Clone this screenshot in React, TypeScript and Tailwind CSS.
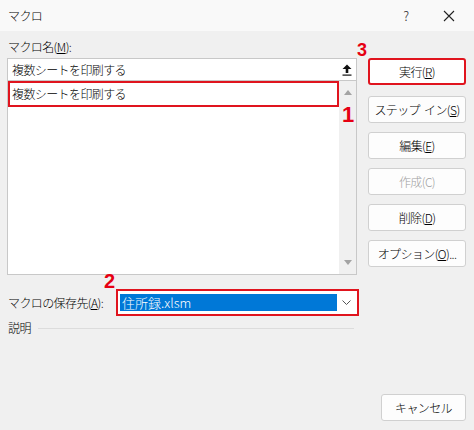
import React from "react";

const font = { fontFamily: '"Noto Sans CJK JP", "Noto Sans", sans-serif' };

function Btn({
  children,
  disabled,
  marked,
  className = "",
}: {
  children: React.ReactNode;
  disabled?: boolean;
  marked?: boolean;
  className?: string;
}) {
  return (
    <div
      className={`h-[27px] flex items-center justify-center rounded-[3px] text-[12px] ${
        marked ? "border-2 border-[#e0141e] bg-white" : "border border-[#d0d0d0] bg-[#fdfdfd]"
      } ${disabled ? "text-[#a0a0a0]" : "text-black"} ${className}`}
    >
      {children}
    </div>
  );
}

function Mark({ n, className }: { n: string; className: string }) {
  return (
    <div
      className={`absolute text-[#e60012] font-bold leading-none ${className}`}
      style={{ fontFamily: '"Liberation Sans", Arial, sans-serif' }}
    >
      {n}
    </div>
  );
}

export default function App() {
  return (
    <div
      className="w-[474px] h-[430px] bg-[#f0f0f0] flex flex-col relative overflow-hidden font-light tracking-[-0.6px] text-black"
      style={font}
    >
      {/* title bar */}
      <div className="h-[31px] bg-[#f9f9f9] flex items-center pl-[8px] text-[12px]">
        <span>マクロ</span>
        <span className="ml-auto w-[20px] text-center text-[13px] text-[#333]">?</span>
        <svg className="ml-[27px] mr-[19px]" width="12" height="12" viewBox="0 0 12 12">
          <path d="M1 1L11 11M11 1L1 11" stroke="#222" strokeWidth="1.1" />
        </svg>
      </div>

      <div className="flex pl-[7px] pt-[7px]">
        {/* left column */}
        <div className="w-[350px] flex flex-col">
          <div className="h-[20px] text-[12px] pl-[1px]">
            マクロ名(<span className="underline">M</span>):
          </div>
          <div className="h-[23px] bg-white border border-[#c8c8c8] flex items-center text-[12px] pl-[4px]">
            <span>複数シートを印刷する</span>
            <div className="ml-auto w-[17px] h-[19px] mr-[1px] flex items-center justify-center">
              <svg width="10" height="12" viewBox="0 0 10 12">
                <path d="M5 0.5L9.5 5H6.3V9H3.7V5H0.5Z" fill="#111" />
                <rect x="0.5" y="10.5" width="9" height="1.2" fill="#111" />
              </svg>
            </div>
          </div>
          <div className="h-[194px] bg-white border border-t-0 border-[#c8c8c8] flex">
            <div className="flex-1">
              <div className="h-[26px] border-2 border-[#e0141e] flex items-center pl-[2px] text-[12px]">
                複数シートを印刷する
              </div>
            </div>
            <div className="w-[17px] bg-[#f0f0f0] flex flex-col items-center justify-between py-[9px]">
              <svg width="8" height="5" viewBox="0 0 8 5">
                <path d="M0 5L4 0L8 5Z" fill="#a3a3a3" />
              </svg>
              <svg width="8" height="5" viewBox="0 0 8 5">
                <path d="M0 0L8 0L4 5Z" fill="#a3a3a3" />
              </svg>
            </div>
          </div>
        </div>

        {/* right column */}
        <div className="ml-[11px] w-[98px] flex flex-col pt-[20px]">
          <Btn marked>
            実行(<span className="underline">R</span>)
          </Btn>
          <Btn className="mt-[11px]">
            ステップ<span className="w-[4px]" />イン(<span className="underline">S</span>)
          </Btn>
          <Btn className="mt-[9px]">
            編集(<span className="underline">E</span>)
          </Btn>
          <Btn disabled className="mt-[9px]">
            作成(C)
          </Btn>
          <Btn className="mt-[9px]">
            削除(<span className="underline">D</span>)
          </Btn>
          <Btn className="mt-[9px]">
            オプション(<span className="underline">O</span>)...
          </Btn>
        </div>
      </div>

      {/* store location */}
      <div className="flex items-center pl-[8px] mt-[14px] text-[12px]">
        <span className="w-[108px]">
          マクロの保存先(<span className="underline">A</span>):
        </span>
        <div className="w-[243px] h-[27px] border-2 border-[#e0141e] bg-white flex items-center p-[2px]">
          <div className="flex-1 h-[17px] bg-[#0078d7] text-white text-[13px] leading-[17px] pl-[2px] tracking-normal">
            住所録.xlsm
          </div>
          <div className="w-[18px] flex items-center justify-center">
            <svg width="9" height="5" viewBox="0 0 9 5">
              <path d="M0.5 0.5L4.5 4.5L8.5 0.5" stroke="#555" strokeWidth="1" fill="none" />
            </svg>
          </div>
        </div>
      </div>

      {/* description */}
      <div className="flex items-center pl-[8px] mt-[3px] text-[12px]">
        <span>説明</span>
        <div className="ml-[7px] w-[316px] h-px bg-[#dcdcdc]" />
      </div>

      {/* cancel */}
      <div className="flex justify-end pr-[8px] mt-auto mb-[9px]">
        <Btn className="w-[85px]">キャンセル</Btn>
      </div>

      <Mark n="1" className="left-[342px] top-[104px] text-[22px]" />
      <Mark n="2" className="left-[104px] top-[271px] text-[20px]" />
      <Mark n="3" className="left-[357px] top-[41px] text-[18px]" />
    </div>
  );
}
